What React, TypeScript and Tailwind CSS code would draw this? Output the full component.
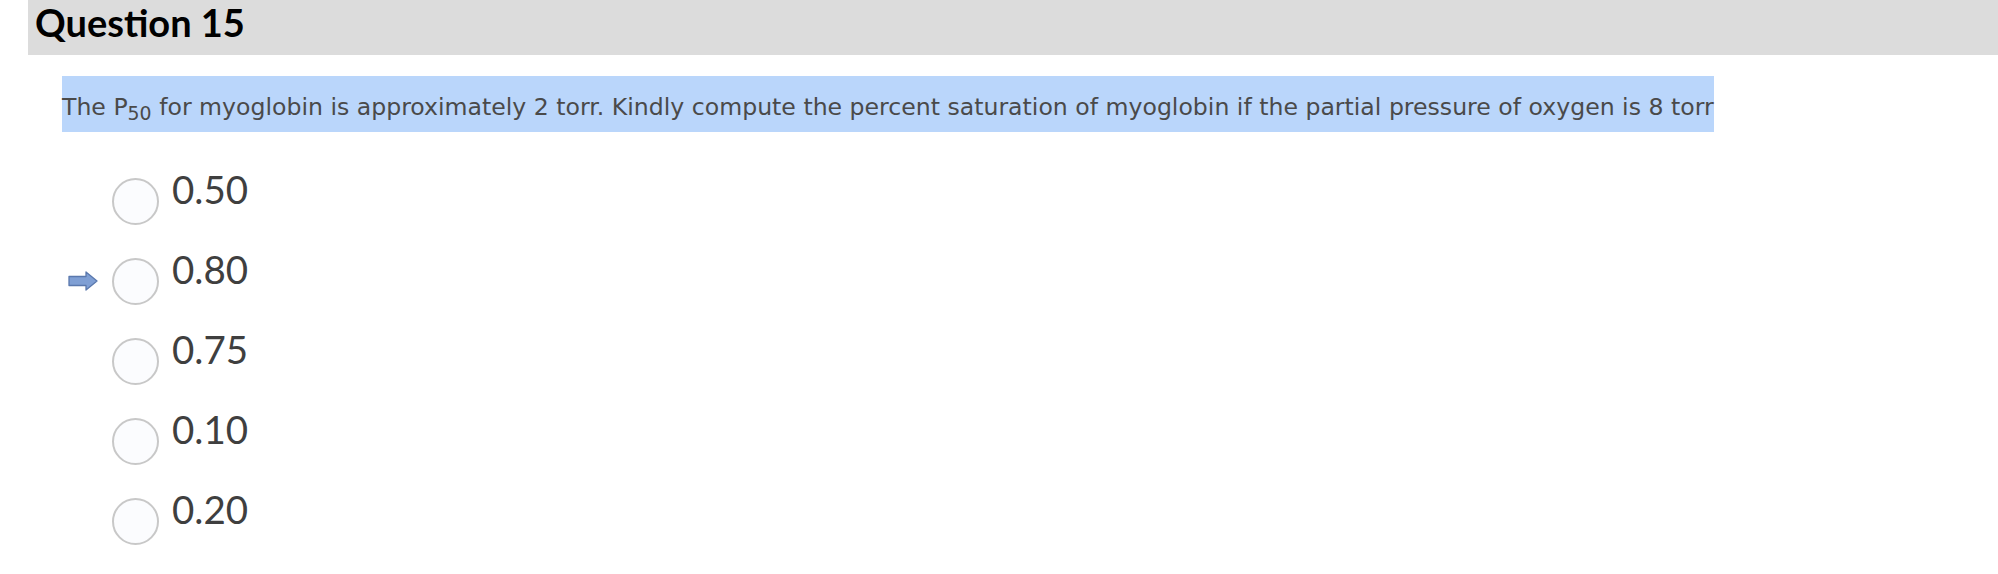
const options = [
  { label: '0.50', pointed: false },
  { label: '0.80', pointed: true },
  { label: '0.75', pointed: false },
  { label: '0.10', pointed: false },
  { label: '0.20', pointed: false },
];

function Arrow() {
  return (
    <svg width="30" height="20" viewBox="0 0 30 20">
      <path
        d="M1 5.5 H18 V1 L29 10 L18 19 V14.5 H1 Z"
        fill="#7f9fd4"
        stroke="#5a78ad"
        strokeWidth="1.3"
        strokeLinejoin="round"
      />
    </svg>
  );
}

export default function App() {
  return (
    <div className="min-h-screen bg-white">
      <div className="ml-[28px] h-[55px] bg-[#dcdcdc] pl-[7px] pt-[3px]">
        <h2 className="text-[38px] font-bold text-black leading-none font-['Lato',sans-serif]">Question 15</h2>
      </div>

      <div className="mt-[21px] ml-[62px]">
        <p className="inline-block bg-[#bad6fb] h-[56px] pt-[6px] leading-[50px] text-[23.6px] text-[#4a4a4a] font-['DejaVu_Sans','Verdana',sans-serif]">
          The P<sub className="text-[0.8em] relative top-[0.25em] align-baseline">50</sub> for myoglobin is approximately 2 torr. Kindly compute the percent saturation of myoglobin if the partial pressure of oxygen is 8 torr
        </p>
      </div>

      <div className="mt-[38px] flex flex-col">
        {options.map((opt) => (
          <div key={opt.label} className="h-[80px] flex items-start">
            <div className="w-[112px] pl-[68px] pt-[21px]">{opt.pointed && <Arrow />}</div>
            <div className="mt-[8px] w-[47px] h-[47px] rounded-full border-2 border-[#c8c8c8] bg-[#fbfcfe]" />
            <span className="ml-[13px] text-[38.5px] leading-[38px] text-[#3f3f3f] font-['Lato',sans-serif]">{opt.label}</span>
          </div>
        ))}
      </div>
    </div>
  );
}
